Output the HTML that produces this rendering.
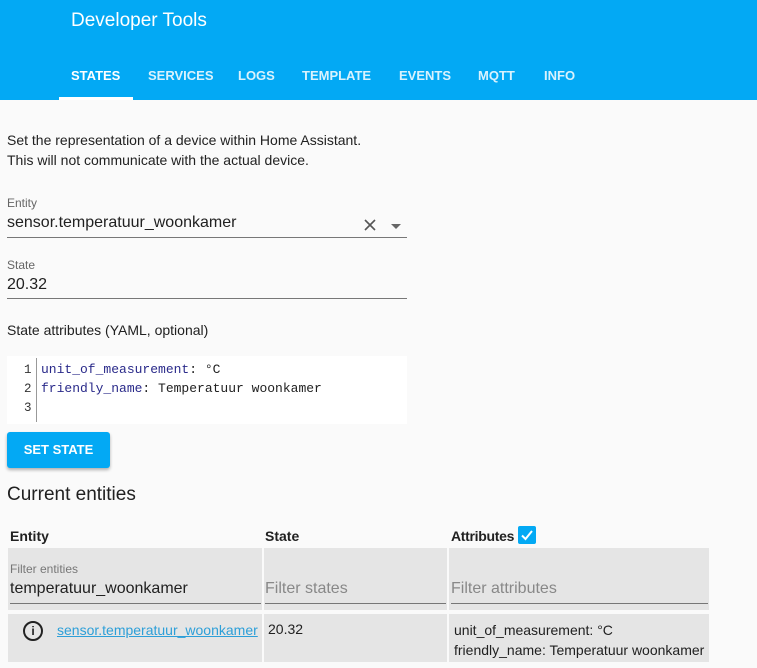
<!DOCTYPE html>
<html><head><style>
*{margin:0;padding:0;box-sizing:border-box}
body{width:757px;height:668px;overflow:hidden;background:#fafafa;font-family:"Liberation Sans",sans-serif;color:#212121;position:relative}
.a{position:absolute;white-space:nowrap}
.hdr{position:absolute;left:0;top:0;width:757px;height:100px;background:#03a9f4}
.tab{position:absolute;top:68px;color:#fff;font-size:13px;font-weight:bold;opacity:.85}
.cell{position:absolute;background:#e5e5e5}
.line{position:absolute;height:1px;background:#777}
</style></head><body>
<div class="hdr">
<div class="a" style="left:71px;top:10px;font-size:19px;color:#fff">Developer Tools</div>
<div class="tab" style="left:71px;opacity:1">STATES</div>
<div class="tab" style="left:148px">SERVICES</div>
<div class="tab" style="left:238px">LOGS</div>
<div class="tab" style="left:302px">TEMPLATE</div>
<div class="tab" style="left:399px">EVENTS</div>
<div class="tab" style="left:478px">MQTT</div>
<div class="tab" style="left:544px">INFO</div>
<div class="a" style="left:59px;top:97px;width:74px;height:3px;background:#fff"></div>
</div>
<div class="a" style="left:7px;top:130px;font-size:14px;line-height:20px">Set the representation of a device within Home Assistant.<br>This will not communicate with the actual device.</div>
<div class="a" style="left:7px;top:196px;font-size:12px;color:#666">Entity</div>
<div class="a" style="left:7px;top:214px;font-size:16px">sensor.temperatuur_woonkamer</div>
<svg class="a" style="left:363px;top:218px" width="14" height="14"><path d="M2 2l10 10M12 2L2 12" stroke="#555" stroke-width="1.6"/></svg>
<div class="a" style="left:391px;top:224px;width:0;height:0;border-left:5px solid transparent;border-right:5px solid transparent;border-top:5px solid #666"></div>
<div class="line" style="left:7px;top:237px;width:400px"></div>
<div class="a" style="left:7px;top:258px;font-size:12px;color:#666">State</div>
<div class="a" style="left:7px;top:276px;font-size:16px">20.32</div>
<div class="line" style="left:7px;top:298px;width:400px"></div>
<div class="a" style="left:7px;top:322px;font-size:14px">State attributes (YAML, optional)</div>
<div class="a" style="left:7px;top:356px;width:400px;height:68px;background:#fff"></div>
<div class="a" style="left:36px;top:358px;width:1px;height:64px;background:#999"></div>
<div class="a" style="left:24px;top:361px;font-family:'Liberation Mono',monospace;font-size:12.5px;line-height:19px;color:#333">1<br>2<br>3</div>
<div class="a" style="left:41px;top:360px;font-family:'Liberation Mono',monospace;font-size:13px;line-height:19px"><span style="color:#2a2a8a">unit_of_measurement</span>: °C<br><span style="color:#2a2a8a">friendly_name</span>: Temperatuur woonkamer</div>
<div class="a" style="left:7px;top:432px;width:103px;height:36px;background:#03a9f4;border-radius:3px;box-shadow:0 2px 3px rgba(0,0,0,.3);color:#fff;font-size:13px;font-weight:bold;text-align:center;line-height:36px">SET STATE</div>
<div class="a" style="left:7px;top:484px;font-size:19px">Current entities</div>
<div class="a" style="left:10px;top:528px;font-size:14px;font-weight:bold">Entity</div>
<div class="a" style="left:265px;top:528px;font-size:14px;font-weight:bold">State</div>
<div class="a" style="left:451px;top:528px;font-size:14px;font-weight:bold;letter-spacing:-0.3px">Attributes</div>
<div class="a" style="left:518px;top:526px;width:18px;height:18px;background:#03a9f4;border-radius:2px"><svg width="18" height="18"><path d="M4 9.5l3.5 3.5 6.5-8" stroke="#fff" stroke-width="2" fill="none"/></svg></div>
<div class="cell" style="left:8px;top:548px;width:254px;height:62px"></div>
<div class="cell" style="left:264px;top:548px;width:183px;height:62px"></div>
<div class="cell" style="left:449px;top:548px;width:260px;height:62px"></div>
<div class="a" style="left:10px;top:562px;font-size:12px;color:#777">Filter entities</div>
<div class="a" style="left:10px;top:580px;font-size:16px">temperatuur_woonkamer</div>
<div class="a" style="left:265px;top:580px;font-size:16px;color:#888">Filter states</div>
<div class="a" style="left:451px;top:580px;font-size:16px;color:#888">Filter attributes</div>
<div class="line" style="left:10px;top:603px;width:251px"></div>
<div class="line" style="left:265px;top:603px;width:181px"></div>
<div class="line" style="left:451px;top:603px;width:257px"></div>
<div class="cell" style="left:8px;top:614px;width:254px;height:48px"></div>
<div class="cell" style="left:264px;top:614px;width:183px;height:48px"></div>
<div class="cell" style="left:449px;top:614px;width:260px;height:48px"></div>
<div class="a" style="left:23px;top:621px;width:20px;height:20px;border:2px solid #222;border-radius:50%;font-size:12px;font-weight:bold;text-align:center;line-height:16px">i</div>
<div class="a" style="left:57px;top:622px;font-size:14px;color:#2d9fd8;text-decoration:underline">sensor.temperatuur_woonkamer</div>
<div class="a" style="left:268px;top:621px;font-size:14px">20.32</div>
<div class="a" style="left:454px;top:620px;font-size:14px;line-height:20px">unit_of_measurement: °C<br>friendly_name: Temperatuur woonkamer</div>
</body></html>
